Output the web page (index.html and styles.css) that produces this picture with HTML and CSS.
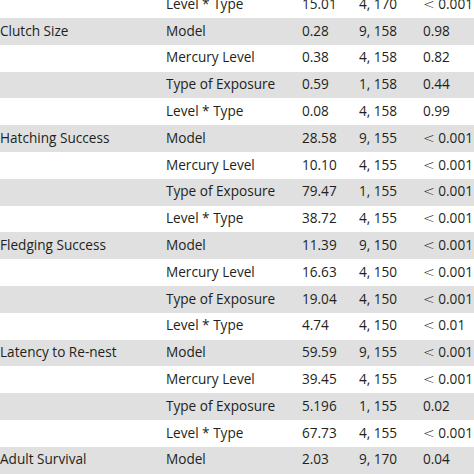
FILE: index.html
```html
<!DOCTYPE html>
<html>
<head>
<meta charset="utf-8">
<link rel="stylesheet" href="styles.css">
</head>
<body>
<table class="stats">
<tbody>
<tr class="w"><td class="c1"></td><td class="c2">Level * Type</td><td class="c3">15.01</td><td class="c4">4, 170</td><td class="c5"><span class="lt">&lt;</span> 0.001</td></tr>
<tr class="g"><td class="c1">Clutch Size</td><td class="c2">Model</td><td class="c3">0.28</td><td class="c4">9, 158</td><td class="c5">0.98</td></tr>
<tr class="w"><td class="c1"></td><td class="c2">Mercury Level</td><td class="c3">0.38</td><td class="c4">4, 158</td><td class="c5">0.82</td></tr>
<tr class="g"><td class="c1"></td><td class="c2">Type of Exposure</td><td class="c3">0.59</td><td class="c4">1, 158</td><td class="c5">0.44</td></tr>
<tr class="w"><td class="c1"></td><td class="c2">Level * Type</td><td class="c3">0.08</td><td class="c4">4, 158</td><td class="c5">0.99</td></tr>
<tr class="g"><td class="c1">Hatching Success</td><td class="c2">Model</td><td class="c3">28.58</td><td class="c4">9, 155</td><td class="c5"><span class="lt">&lt;</span> 0.001</td></tr>
<tr class="w"><td class="c1"></td><td class="c2">Mercury Level</td><td class="c3">10.10</td><td class="c4">4, 155</td><td class="c5"><span class="lt">&lt;</span> 0.001</td></tr>
<tr class="g"><td class="c1"></td><td class="c2">Type of Exposure</td><td class="c3">79.47</td><td class="c4">1, 155</td><td class="c5"><span class="lt">&lt;</span> 0.001</td></tr>
<tr class="w"><td class="c1"></td><td class="c2">Level * Type</td><td class="c3">38.72</td><td class="c4">4, 155</td><td class="c5"><span class="lt">&lt;</span> 0.001</td></tr>
<tr class="g"><td class="c1">Fledging Success</td><td class="c2">Model</td><td class="c3">11.39</td><td class="c4">9, 150</td><td class="c5"><span class="lt">&lt;</span> 0.001</td></tr>
<tr class="w"><td class="c1"></td><td class="c2">Mercury Level</td><td class="c3">16.63</td><td class="c4">4, 150</td><td class="c5"><span class="lt">&lt;</span> 0.001</td></tr>
<tr class="g"><td class="c1"></td><td class="c2">Type of Exposure</td><td class="c3">19.04</td><td class="c4">4, 150</td><td class="c5"><span class="lt">&lt;</span> 0.001</td></tr>
<tr class="w"><td class="c1"></td><td class="c2">Level * Type</td><td class="c3">4.74</td><td class="c4">4, 150</td><td class="c5"><span class="lt">&lt;</span> 0.01</td></tr>
<tr class="g"><td class="c1">Latency to Re-nest</td><td class="c2">Model</td><td class="c3">59.59</td><td class="c4">9, 155</td><td class="c5"><span class="lt">&lt;</span> 0.001</td></tr>
<tr class="w"><td class="c1"></td><td class="c2">Mercury Level</td><td class="c3">39.45</td><td class="c4">4, 155</td><td class="c5"><span class="lt">&lt;</span> 0.001</td></tr>
<tr class="g"><td class="c1"></td><td class="c2">Type of Exposure</td><td class="c3">5.196</td><td class="c4">1, 155</td><td class="c5">0.02</td></tr>
<tr class="w"><td class="c1"></td><td class="c2">Level * Type</td><td class="c3">67.73</td><td class="c4">4, 155</td><td class="c5"><span class="lt">&lt;</span> 0.001</td></tr>
<tr class="g"><td class="c1">Adult Survival</td><td class="c2">Model</td><td class="c3">2.03</td><td class="c4">9, 170</td><td class="c5">0.04</td></tr>
</tbody>
</table>
</body>
</html>
```
FILE: styles.css
```css
html, body {
  margin: 0;
  padding: 0;
  background: #ffffff;
  overflow: hidden;
}
.stats {
  border-collapse: collapse;
  width: 474px;
  table-layout: fixed;
  margin-top: -8.8px;
  font-family: "Open Sans", "Liberation Sans", sans-serif;
  font-size: 13.6px;
  color: #231f20;
}
.stats tr {
  height: 26.8px;
}
.stats td {
  padding: 0 0 1.6px 0;
  height: 25.2px;
  white-space: nowrap;
  vertical-align: middle;
  line-height: 20px;
  overflow: hidden;
}
.g td {
  background: #e0e0e0;
}
.c1 { width: 166px; }
.c2 { width: 136px; }
.c3 { width: 57px; }
.c4 { width: 64px; }
.c5 { width: 51px; }
.lt {
  font-family: "DejaVu Sans", sans-serif;
  font-weight: 300;
  font-size: 14px;
  line-height: 0;
}
```
